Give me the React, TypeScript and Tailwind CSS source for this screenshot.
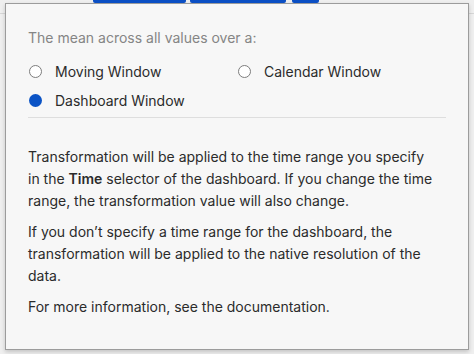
import React from "react";

function Radio({ checked, label }: { checked?: boolean; label: string }) {
  return (
    <div className="flex items-center h-[29px]">
      {checked ? (
        <span className="w-[13px] h-[13px] rounded-full bg-[#0b53c5] ml-[1px]" />
      ) : (
        <span className="w-[13px] h-[13px] rounded-full border border-[#7d7d7d] bg-white ml-[1px]" />
      )}
      <span className="ml-[13px] text-[14px] text-[#2b2b2b]">{label}</span>
    </div>
  );
}

export default function App() {
  return (
    <div
      className="relative w-[474px] h-[354px] bg-[#efefef] overflow-hidden pt-[3px] pl-[5px]"
      style={{ fontFamily: "Inter, 'Open Sans', sans-serif" }}
    >
      <div className="absolute left-0 right-0 top-[13px] h-px bg-[#d6d6d6]" />
      <div className="relative w-[464px] h-[347px] bg-[#f7f7f7] border border-[#9c9c9c] shadow-[0_2px_4px_rgba(0,0,0,0.18)] px-[22px] pt-[23px]">
        <p className="text-[14px] leading-[22px] text-[#858585]">The mean across all values over a:</p>
        <div className="mt-[8px] grid grid-cols-[209px_1fr]">
          <Radio label="Moving Window" />
          <Radio label="Calendar Window" />
          <Radio checked label="Dashboard Window" />
        </div>
        <div className="mt-[2px] h-px bg-[#dedede] w-[418px]" />
        <div className="mt-[28px] max-w-[405px] text-[14px] leading-[22px] text-[#2b2b2b] flex flex-col gap-[9px]">
          <p>
            Transformation will be applied to the time range you specify in the <b className="font-semibold">Time</b> selector of the dashboard. If you change the time range, the transformation value will also change.
          </p>
          <p>
            If you don’t specify a time range for the dashboard, the transformation will be applied to the native resolution of the data.
          </p>
          <p>For more information, see the documentation.</p>
        </div>
      </div>
      <div className="absolute top-0 left-[93px] w-[93px] h-[3px] bg-[#0b4fc4] rounded-b-[2px]" />
      <div className="absolute top-0 left-[190px] w-[96px] h-[3px] bg-[#0b4fc4] rounded-b-[2px]" />
      <div className="absolute top-0 left-[292px] w-[27px] h-[3px] bg-[#0b4fc4] rounded-b-[2px]" />
    </div>
  );
}
